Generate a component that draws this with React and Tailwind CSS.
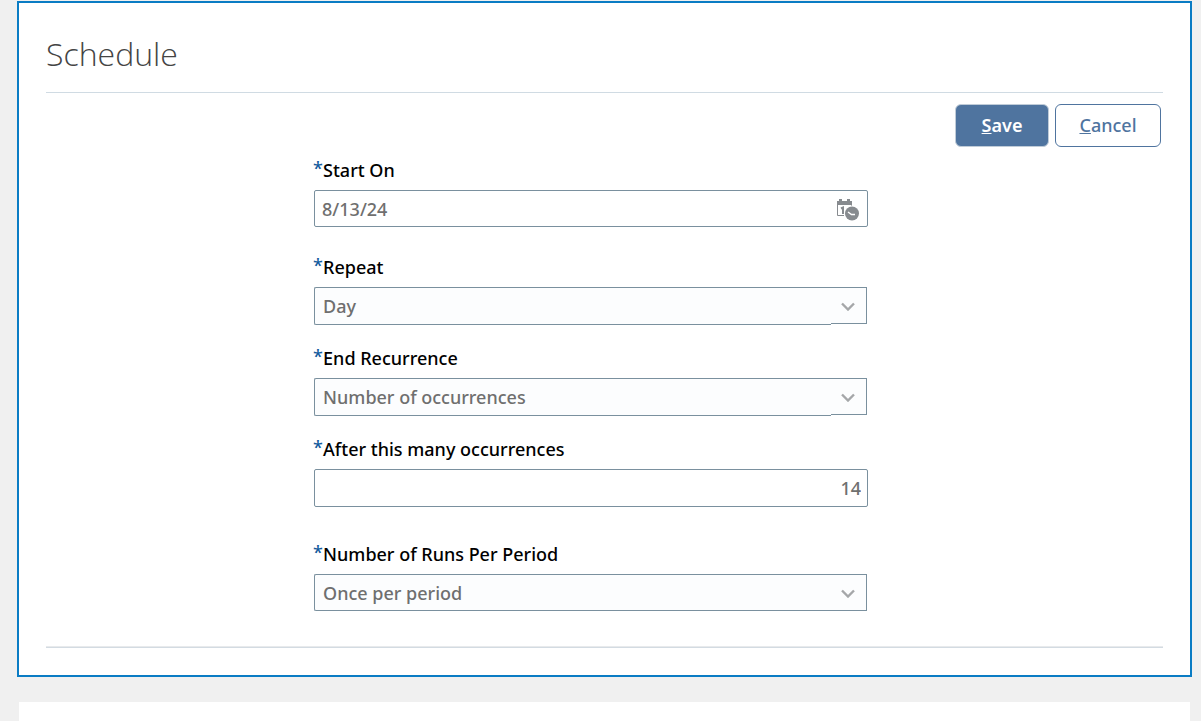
import React, { useState } from 'react';
import clsx from 'clsx';

const Label = ({ htmlFor, children }) => (
  <label htmlFor={htmlFor} className="mb-2 flex h-6 items-center text-lg leading-6 font-medium text-black">
    <span className="-ml-px h-6 w-2.5 text-lg leading-5 text-[#145c9e]">*</span>
    {children}
  </label>
);

const DateTimeIcon = () => (
  <svg width="24" height="24" viewBox="0 0 24 24" fill="none">
    <path d="M1 4h15v4H1z" fill="#878b8f" />
    <path d="M3 2h3v4H3zM11 2h3v4h-3z" fill="#878b8f" />
    <path d="M1.5 7v11.5H8M15.5 7v3" stroke="#878b8f" />
    <path d="M5 11.5l2-1V17" stroke="#878b8f" strokeWidth="2" />
    <circle cx="16" cy="16.5" r="8" fill="#fff" />
    <circle cx="16" cy="16.5" r="7" fill="#878b8f" />
    <path d="M12 15l3.5 2.5H19" stroke="#fff" strokeWidth="1.5" />
  </svg>
);

const SelectField = ({ id, label, value, onChange, options, tall, className }) => (
  <div className={className}>
    <Label htmlFor={id}>{label}</Label>
    <div className="flex items-start pr-px">
      <select
        id={id}
        value={value}
        onChange={(e) => onChange(e.target.value)}
        className={clsx(
          'min-w-0 flex-1 appearance-none rounded-l-xs border border-r-0 border-[#7a909e] bg-[#fcfdfe] px-2 text-lg font-medium text-[#6f6f6f] outline-none',
          tall ? 'h-[38px]' : 'h-[37px]'
        )}
      >
        {options.map((option) => (
          <option key={option}>{option}</option>
        ))}
      </select>
      <span className="flex h-[37px] w-9 items-center justify-center border border-l-0 border-[#7a909e] bg-[#fcfdfe]">
        <svg width="16" height="10" viewBox="0 0 16 10" fill="none">
          <path d="M1 2.5l6 6 6-6" stroke="#a5a7a9" strokeWidth="2.4" />
        </svg>
      </span>
    </div>
  </div>
);

const App = () => {
  const [startOn, setStartOn] = useState('8/13/24');
  const [repeat, setRepeat] = useState('Day');
  const [endRecurrence, setEndRecurrence] = useState('Number of occurrences');
  const [occurrences, setOccurrences] = useState('14');
  const [runs, setRuns] = useState('Once per period');

  return (
    <div className="min-h-screen bg-[#f0f0f0] pt-px pr-[9px] pl-[17px] font-['Noto_Sans','Open_Sans',sans-serif]">
      <main className="border-2 border-[#0a7cc4] bg-white px-[27px] pb-[27px]">
        <h1 className="flex h-[90px] items-center border-b border-[#d0dbe3] pt-3 font-['Open_Sans','Noto_Sans',sans-serif] text-[32px] font-light text-[#444444]">
          Schedule
        </h1>

        {/* Actions */}
        <div className="flex justify-end gap-1.5 pt-[11px] pr-0.5">
          <button
            type="button"
            className="h-[43px] w-[94px] rounded-md border border-[#c0ccd8] bg-[#4f749f] pb-0.5 text-lg font-semibold text-white"
          >
            <span className="underline">S</span>ave
          </button>
          <button
            type="button"
            className="h-[43px] w-[106px] rounded-md border border-[#4f749f] bg-white pb-0.5 text-lg font-medium text-[#4f749f]"
          >
            <span className="underline">C</span>ancel
          </button>
        </div>

        {/* Form */}
        <form className="mt-[11px] ml-[24%] w-[554px] max-w-full">
          <div className="mb-7">
            <Label htmlFor="startOn">Start On</Label>
            <div className="flex h-[37px] items-center rounded-xs border border-[#7a909e] bg-white px-[7px]">
              <input
                id="startOn"
                type="text"
                value={startOn}
                onChange={(e) => setStartOn(e.target.value)}
                className="min-w-0 flex-1 text-lg font-medium text-[#6f6f6f] outline-none"
              />
              <button type="button" aria-label="Select date and time">
                <DateTimeIcon />
              </button>
            </div>
          </div>

          <SelectField
            id="repeat"
            label="Repeat"
            value={repeat}
            onChange={setRepeat}
            options={['Day', 'Week', 'Month']}
            tall
            className="mb-[21px]"
          />

          <SelectField
            id="endRecurrence"
            label="End Recurrence"
            value={endRecurrence}
            onChange={setEndRecurrence}
            options={['Number of occurrences', 'End date']}
            tall
            className="mb-[21px]"
          />

          <div className="mb-[35px]">
            <Label htmlFor="occurrences">After this many occurrences</Label>
            <input
              id="occurrences"
              type="text"
              value={occurrences}
              onChange={(e) => setOccurrences(e.target.value)}
              className="block h-[38px] w-full rounded-xs border border-[#7a909e] bg-white px-1.5 text-right text-lg font-medium text-[#6f6f6f] outline-none"
            />
          </div>

          <SelectField
            id="runs"
            label="Number of Runs Per Period"
            value={runs}
            onChange={setRuns}
            options={['Once per period', 'Twice per period']}
            className="mb-[35px]"
          />
        </form>

        <hr className="h-0.5 border-t border-b border-t-[#e8eaec] border-b-[#d3dbe2]" />
      </main>

      <section className="mt-[25px] mr-0.5 ml-0.5 h-[19px] bg-white" />
    </div>
  );
};

export default App;
